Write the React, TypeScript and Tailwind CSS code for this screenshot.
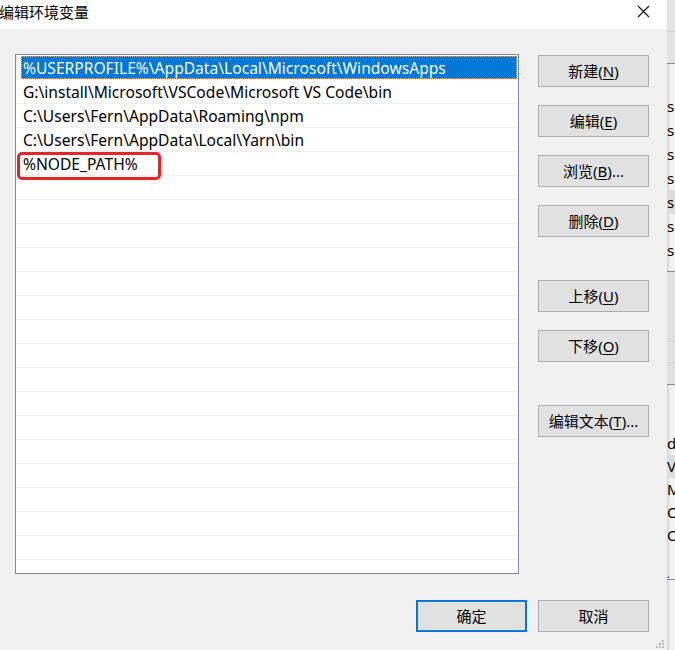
import React from "react";

const font = { fontFamily: '"Noto Sans", "Noto Sans CJK SC", sans-serif' };

const paths = [
  "%USERPROFILE%\\AppData\\Local\\Microsoft\\WindowsApps",
  "G:\\install\\Microsoft\\VSCode\\Microsoft VS Code\\bin",
  "C:\\Users\\Fern\\AppData\\Roaming\\npm",
  "C:\\Users\\Fern\\AppData\\Local\\Yarn\\bin",
  "%NODE_PATH%",
];

const Btn = ({
  label,
  hotkey,
  tail = "",
  primary = false,
  className = "",
}: {
  label: string;
  hotkey?: string;
  tail?: string;
  primary?: boolean;
  className?: string;
}) => (
  <button
    className={`h-[32px] w-[111px] bg-[#e1e1e1] text-[15px] text-black flex items-center justify-center ${
      primary ? "border-2 border-[#0078d7]" : "border border-[#adadad]"
    } ${className}`}
  >
    {label}
    {hotkey && (
      <>
        (<span className="underline underline-offset-2">{hotkey}</span>){tail}
      </>
    )}
  </button>
);

// sliver of the window behind the dialog
const BackWindow = () => {
  const upper = Array.from({ length: 7 });
  return (
    <div className="w-[8px] h-[650px] bg-[#f2f2f2] overflow-hidden flex flex-col text-[15px] leading-none text-black shadow-[inset_2px_0_2px_rgba(0,0,0,0.12)]">
      <div className="h-[32px] bg-[#e3e3e3] border-b border-[#d0d0d0]" />
      <div className="h-[32px] bg-[#e3e3e3] border-b border-[#8a8a8a]" />
      <div className="h-[30px]" />
      {upper.map((_, i) => (
        <div
          key={i}
          className={`h-[24px] flex items-center ${i === 4 ? "bg-[#dcdcdc]" : ""}`}
        >
          s
        </div>
      ))}
      <div className="h-[10px] border-b border-[#8a8a8a]" />
      <div className="h-[70px] bg-[#e0e0e0] border-b border-[#cfcfcf]" />
      <div className="h-[21px] bg-[#e0e0e0] border-b border-[#cfcfcf]" />
      <div className="h-[22px] bg-[#e0e0e0] border-b border-[#8a8a8a]" />
      <div className="h-[47px]" />
      {["d", "VI", "M", "O", "O"].map((t, i) => (
        <div
          key={i}
          className={`h-[23px] flex items-center ${i === 1 ? "bg-[#dcdcdc]" : ""}`}
        >
          {t}
        </div>
      ))}
      <div className="h-[33px] border-b border-[#8a8a8a] flex items-end text-[10px]">.</div>
    </div>
  );
};

export default function App() {
  return (
    <div className="w-[675px] h-[650px] flex overflow-hidden" style={font}>
      <div className="w-[667px] h-[650px] bg-[#f0f0f0] flex flex-col relative">
        {/* title bar */}
        <div className="h-[29px] bg-white flex items-center justify-between">
          <span className="text-[15px] text-black -ml-[1px] -mt-[4px]">编辑环境变量</span>
          <svg width="13" height="13" viewBox="0 0 13 13" className="mr-[17px] -mt-[6px]">
            <path d="M1 1 L12 12 M12 1 L1 12" stroke="#111" strokeWidth="1.1" />
          </svg>
        </div>

        <div className="flex">
          {/* path list */}
          <div className="ml-[15px] mt-[25px] w-[504px] h-[520px] bg-white border border-[#828790] pt-[1px] overflow-hidden relative">
            {Array.from({ length: 22 }).map((_, i) => (
              <div key={i} className="h-[24px] border-b border-[#f0f0f0] flex">
                {i === 0 ? (
                  <div className="ml-[5px] mr-[1px] flex-1 bg-[#0078d7] outline-1 outline-dotted outline-[#f5b474] -outline-offset-1 text-white text-[15.6px] leading-[22px] pt-[1px] pl-[2px]">
                    {paths[0]}
                  </div>
                ) : (
                  <div className="ml-[5px] flex-1 text-black text-[15.6px] leading-[22px] pt-[1px] pl-[2px]">
                    {paths[i] ?? ""}
                  </div>
                )}
              </div>
            ))}
            <div className="absolute left-[1px] top-[97px] w-[144px] h-[28px] border-[3px] border-[#e3262b] rounded-[5px]" />
          </div>

          {/* side buttons */}
          <div className="ml-[19px] mt-[26px] flex flex-col">
            <Btn label="新建" hotkey="N" />
            <Btn label="编辑" hotkey="E" className="mt-[18px]" />
            <Btn label="浏览" hotkey="B" tail="..." className="mt-[18px]" />
            <Btn label="删除" hotkey="D" className="mt-[18px]" />
            <Btn label="上移" hotkey="U" className="mt-[43px]" />
            <Btn label="下移" hotkey="O" className="mt-[18px]" />
            <Btn label="编辑文本" hotkey="T" tail="..." className="mt-[43px]" />
          </div>
        </div>

        {/* footer */}
        <div className="mt-[26px] flex justify-end gap-[11px] pr-[18px]">
          <Btn label="确定" primary />
          <Btn label="取消" />
        </div>

        {/* resize grip */}
        <svg width="8" height="8" viewBox="0 0 8 8" className="absolute right-[3px] bottom-[2px]">
          <rect x="6" y="0" width="2" height="2" fill="#bdbdbd" />
          <rect x="3" y="3" width="2" height="2" fill="#bdbdbd" />
          <rect x="6" y="3" width="2" height="2" fill="#bdbdbd" />
          <rect x="0" y="6" width="2" height="2" fill="#bdbdbd" />
          <rect x="3" y="6" width="2" height="2" fill="#bdbdbd" />
          <rect x="6" y="6" width="2" height="2" fill="#bdbdbd" />
        </svg>
      </div>
      <BackWindow />
    </div>
  );
}
